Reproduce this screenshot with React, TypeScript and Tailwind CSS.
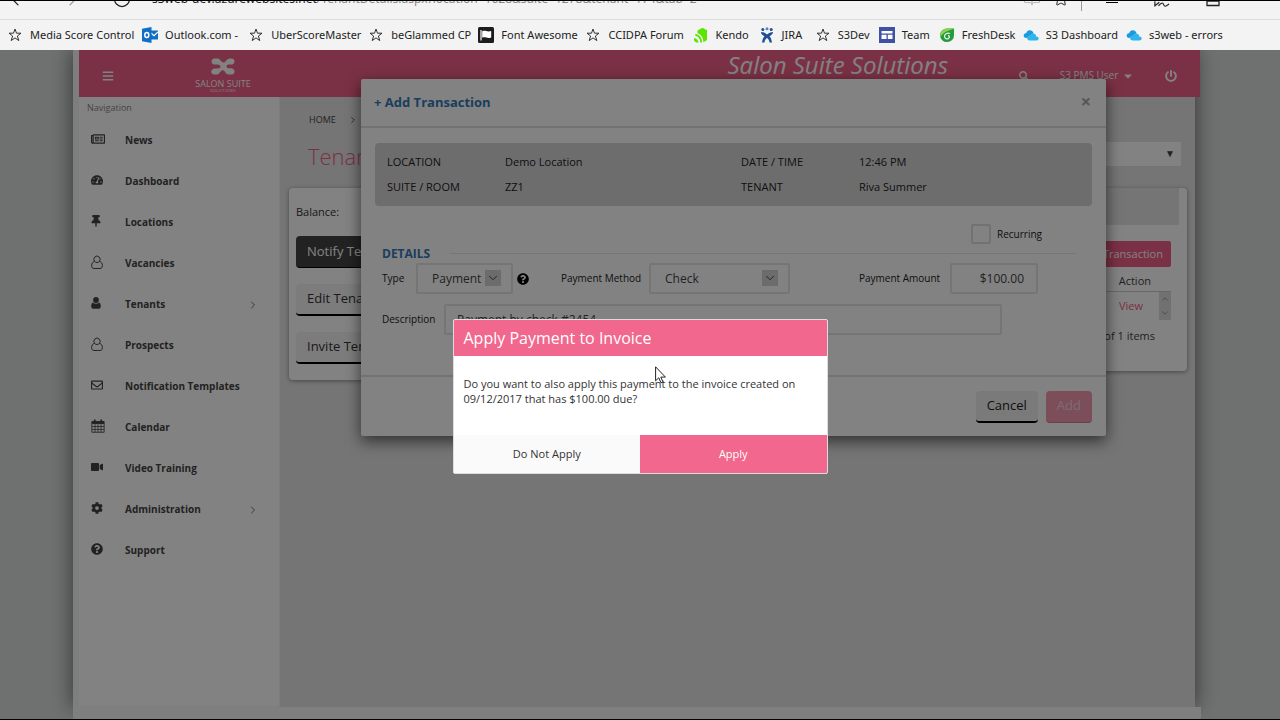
import type { ReactNode } from 'react';
import {
  FaBars,
  FaCaretDown,
  FaCog,
  FaPowerOff,
  FaQuestionCircle,
  FaRegEnvelope,
  FaRegNewspaper,
  FaSearch,
  FaTachometerAlt,
  FaThumbtack,
  FaVideo,
} from 'react-icons/fa';
import { ArrowLeft, ArrowRight, BookOpen, ChevronDown, ChevronRight, ChevronUp, RotateCw, Star } from 'lucide-react';

const StarIcon = () => (
  <svg viewBox="0 0 14 14" className="size-3.5" fill="none" stroke="#333" strokeWidth="1">
    <path d="M7 1 8.5 5.2H13L9.4 8l1.4 4.6L7 9.9l-3.8 2.7L4.6 8 1 5.2h4.5Z" />
  </svg>
);

const OutlookIcon = () => (
  <svg viewBox="0 0 16 16" className="size-4">
    <path d="M9 3.5h7v9H9Z" fill="#0f6fc6" />
    <path d="m9 6 3 2.6 4-3.6" fill="none" stroke="#fff" strokeWidth="1.2" />
    <path d="M0 1.8 9.5 0v16L0 14.2Z" fill="#0f6fc6" />
    <ellipse cx="4.8" cy="8" rx="2" ry="2.5" fill="none" stroke="#fff" strokeWidth="1.5" />
  </svg>
);

const FlagIcon = () => (
  <svg viewBox="0 0 16 16" className="size-4">
    <rect width="16" height="16" rx="1.5" fill="#1c1c1c" />
    <path d="M3 3v10.5" stroke="#fff" strokeWidth="1.2" />
    <path d="M4.2 4.2C7.2 2.6 8.7 5.4 13.2 4v6.4c-4 1.6-6-1.2-9 .3Z" fill="#fff" />
  </svg>
);

const KendoIcon = () => (
  <svg viewBox="0 0 16 16" className="size-4" fill="#5ce500">
    <path d="M9.5.8 14 3.3V13l-3.600 2.200C10.400 10.500 8 7.500 4.500 6.300V3.500Z" />
    <path d="M2.300 6.800c4.200.9 6.800 4 6.800 8.700H7.300c0-3.700-2-6.100-5-6.800Z" />
    <path d="M1 11c2.600.4 4.300 2 4.500 4.500H3L1 13.500Z" />
  </svg>
);

const JiraIcon = () => (
  <svg viewBox="0 0 16 16" className="size-4" fill="#1d4f91">
    <circle cx="3.800" cy="2.500" r="1.500" />
    <circle cx="8" cy="1.700" r="1.500" fill="#4d86c8" />
    <circle cx="12.200" cy="2.500" r="1.500" />
    <path d="M2 5c2.500 0 4 1 6 2.500C10 6 11.500 5 14 5c0 2.500-2 3-3.500 4.200C12 10.500 12.500 13 13 15.500h-2.500c0-2-1-3.500-2.500-4.500-1.500 1-2.500 2.500-2.500 4.500H3c.5-2.500 1-5 2.500-6.300C4 8 2 7.500 2 5Z" />
  </svg>
);

const TeamIcon = () => (
  <svg viewBox="0 0 16 16" className="size-4">
    <rect width="16" height="16" fill="#3f51a5" />
    <path d="M2.500 4h11v2.500h-11ZM2.500 7.700h5V12h-5ZM8.800 7.700h4.700V12H8.800Z" fill="#fff" />
  </svg>
);

const FreshIcon = () => (
  <svg viewBox="0 0 16 16" className="size-4">
    <path d="M8 1.500h7v6.500A7 6.800 0 1 1 8 1.500Z" fill="#259b3e" />
    <path d="M8 1.500h7C12 3.500 4 4 1.500 10.500.300 5 4 1.500 8 1.500Z" fill="#8fd14f" />
    <path d="M11 6.500C8 5.500 5.500 7 5.500 9.300S8 12.500 9.500 11.500s1-2.800-.5-2.800" fill="none" stroke="#e4f6e4" strokeWidth="1.200" />
  </svg>
);

const CloudIcon = () => (
  <svg viewBox="0 0 16 16" className="size-4">
    <path d="M3.5 11C1 11 .3 9 .8 7.700 1.200 6.500 2.300 6 3.200 6.200 3.700 3.800 6 2.800 8 3.500c1.500.5 2.200 1.500 2.500 2.700Z" fill="#1a9be0" />
    <path d="M7 13.500c-2.300 0-3.300-1.500-2.800-3 .4-1.200 1.600-1.700 2.500-1.400C7.300 7 9.500 6 11.300 6.800c1.500.6 1.900 1.700 1.900 2.600 1.500 0 2.600.9 2.500 2.200-.1 1.200-1 1.900-2.200 1.900Z" fill="#2fb4ee" />
  </svg>
);

const bookmarks: { label: string; icon: ReactNode }[] = [
  { label: 'Media Score Control', icon: <StarIcon /> },
  { label: 'Outlook.com -', icon: <OutlookIcon /> },
  { label: 'UberScoreMaster', icon: <StarIcon /> },
  { label: 'beGlammed CP', icon: <StarIcon /> },
  { label: 'Font Awesome', icon: <FlagIcon /> },
  { label: 'CCIDPA Forum', icon: <StarIcon /> },
  { label: 'Kendo', icon: <KendoIcon /> },
  { label: 'JIRA', icon: <JiraIcon /> },
  { label: 'S3Dev', icon: <StarIcon /> },
  { label: 'Team', icon: <TeamIcon /> },
  { label: 'FreshDesk', icon: <FreshIcon /> },
  { label: 'S3 Dashboard', icon: <CloudIcon /> },
  { label: 's3web - errors', icon: <CloudIcon /> },
];

const PersonOutline = () => (
  <svg viewBox="0 0 11 13" className="h-3.5 w-3" fill="none" stroke="currentColor" strokeWidth="0.9">
    <path d="M3.200 6A2.900 3.100 0 1 1 7.800 6C9.600 6.300 10.500 7.800 10.500 10c0 1.600-.8 2.500-2.200 2.500H2.700C1.300 12.500.500 11.600.500 10c0-2.200.9-3.700 2.700-4Z" />
    <path d="M3.200 6c1.300 1.300 3.300 1.300 4.600 0" />
  </svg>
);

const PersonSolid = () => (
  <svg viewBox="0 0 10 12" className="h-3 w-2.5" fill="currentColor">
    <circle cx="5" cy="3" r="2.900" />
    <path d="M2 5.500C.7 6 .2 7.500.2 9.300c0 1.500.8 2.400 1.900 2.400h5.800c1.100 0 1.900-.9 1.900-2.400C9.800 7.500 9.300 6 8 5.500c-1.500 1.600-4.500 1.600-6 0Z" />
  </svg>
);

const CalendarGrid = () => (
  <svg viewBox="0 0 13 13" className="size-3.5" fill="none" stroke="currentColor" strokeWidth="0.8">
    <path d="M.8 2.300h11.400v10H.8Z" />
    <path d="M.8 3.400h11.400" strokeWidth="2.400" />
    <path d="M3.500.5v2.500M9.500.5v2.500" strokeWidth="1.600" />
    <path d="M.8 7h11.400M.8 9.700h11.400M3.700 4.500v7.800M6.500 4.500v7.800M9.300 4.500v7.800" strokeWidth="0.700" />
  </svg>
);

const navItems: { label: string; icon: ReactNode; more?: boolean }[] = [
  { label: 'News', icon: <FaRegNewspaper className="size-3.5" /> },
  { label: 'Dashboard', icon: <FaTachometerAlt className="size-3" /> },
  { label: 'Locations', icon: <FaThumbtack className="h-3 w-2.5" /> },
  { label: 'Vacancies', icon: <PersonOutline /> },
  { label: 'Tenants', icon: <PersonSolid />, more: true },
  { label: 'Prospects', icon: <PersonOutline /> },
  { label: 'Notification Templates', icon: <FaRegEnvelope className="size-3" /> },
  { label: 'Calendar', icon: <CalendarGrid /> },
  { label: 'Video Training', icon: <FaVideo className="size-3" /> },
  { label: 'Administration', icon: <FaCog className="size-3" />, more: true },
  { label: 'Support', icon: <FaQuestionCircle className="size-3" /> },
];

function BrowserChrome() {
  return (
    <div className="shrink-0 border-t border-black bg-[#f3f3f3] font-['Noto_Sans',sans-serif] text-[#222]">
      <div className="flex h-[19px] items-end overflow-hidden border-b border-[#dcdcdc] pr-12 pl-2">
        <div className="flex w-36 shrink-0 items-center gap-8 self-start">
          <ArrowLeft className="-mt-3 size-5" strokeWidth={1.5} />
          <ArrowRight className="-mt-3 size-5 text-[#999]" strokeWidth={1.5} />
          <RotateCw className="-mt-3 size-5" strokeWidth={1.5} />
        </div>
        <div className="-mt-3 flex-1 self-start text-xs leading-5 whitespace-nowrap text-[#888]">
          <span className="text-[#222]">s3web-dev.azurewebsites.net</span>
          /TenantDetails.aspx?location=1628&amp;suite=1278&amp;tenant=174&amp;tab=2
        </div>
        <div className="flex items-start gap-3 self-start">
          <BookOpen className="-mt-3 size-[18px] text-[#bbb]" strokeWidth={1.5} />
          <Star className="-mt-2.5 size-4" strokeWidth={1.5} />
          <div className="h-2.5 w-px bg-[#999]" />
          <div className="mx-3 mt-px h-px w-3 bg-black" />
          <svg viewBox="0 0 18 6" className="mx-3 h-1.5 w-4" fill="none" stroke="#222" strokeWidth="1.300">
            <path d="M1 0v5l5-4M5 5c4-4 5-4 6-1s3 1 6-1" />
          </svg>
          <svg viewBox="0 0 14 6" className="mx-3 h-1.5 w-3.5" fill="none" stroke="#222" strokeWidth="1.300">
            <path d="M1 0v4.500h12V0M1 0h12" />
          </svg>
        </div>
      </div>
      <nav
        aria-label="Favorites"
        className="grid h-[30px] grid-cols-[135fr_106fr_120fr_110fr_107fr_107fr_66fr_56fr_64fr_60fr_84fr_103fr_154fr] items-center pl-[7px] text-[11px]"
      >
        {bookmarks.map((b) => (
          <a key={b.label} href="#" className="flex items-center gap-[7px] whitespace-nowrap">
            <span className="flex w-4 shrink-0 justify-center">{b.icon}</span>
            {b.label}
          </a>
        ))}
      </nav>
    </div>
  );
}

function Header() {
  return (
    <header className="mr-px ml-1.5 flex h-[47px] shrink-0 bg-[#f16087] pt-1 text-white">
      <button aria-label="Toggle menu" className="flex w-[58px] items-center justify-center">
        <FaBars className="size-3" />
      </button>
      <div className="flex w-[172px] flex-col items-center pt-1">
        <svg viewBox="0 0 26 17" className="h-[17px] w-[26px]" fill="currentColor">
          <path d="M4.500.5h3C10 .5 11 4.200 13.500 4.500 16 4.800 16 .5 20 .5h1.500c4 0 4 6 0 6h-3c-2.500 0-2.500 3.500 0 3.800h3c4 .4 4 6.200 0 6.200h-3c-3.500 0-3-4-5.500-4.200-3-.2-3 4.200-6 4.200H4.500c-4.300 0-4.300-5.500 0-6 3-.3 6 .3 6-1.800 0-2-3-2.200-6-2.200-4 0-4-6 0-6Z" />
        </svg>
        <span className="mt-1 text-[9px] leading-[9px]">SALON SUITE</span>
        <span className="text-[4px] leading-[6px] tracking-widest">SOLUTIONS</span>
      </div>
      <div className="flex-1 pr-12 text-right text-2xl leading-[22px] whitespace-nowrap italic">Salon Suite Solutions</div>
      <div className="flex items-center text-[10px]">
        <button aria-label="Search" className="flex w-14 justify-center">
          <FaSearch className="size-2.5" />
        </button>
        <button className="flex w-[90px] items-center justify-center gap-1 whitespace-nowrap">
          S3 PMS User <FaCaretDown className="size-3" />
        </button>
        <button aria-label="Log off" className="flex w-[58px] justify-center">
          <FaPowerOff className="size-3" />
        </button>
      </div>
    </header>
  );
}

function Sidebar() {
  return (
    <aside className="ml-1.5 w-[201px] shrink-0 border-r border-b border-[#f4f4f4] bg-white">
      <div className="pt-1 pl-2 text-[9px] leading-[14px] text-[#888]">Navigation</div>
      <nav aria-label="Main" className="mt-[5px]">
        {navItems.map((item) => (
          <a key={item.label} href="#" className="flex h-[41px] items-center pr-5 pl-3 text-[#444]">
            <span className="flex w-[34px] pb-1">{item.icon}</span>
            <span className="flex-1 text-[10px] font-bold whitespace-nowrap">{item.label}</span>
            {item.more && <ChevronRight className="size-3" strokeWidth={1.5} />}
          </a>
        ))}
      </nav>
    </aside>
  );
}

function TenantPage() {
  return (
    <main className="min-w-0 flex-1 bg-[#e5e5e5] pr-2 pl-[9px]">
      <div className="flex items-center gap-3 pt-4 pl-5 text-[9px] leading-[14px] text-[#444]">
        HOME <ChevronRight className="size-2.5" />
      </div>
      <div className="mt-[11px] flex items-start justify-between pr-1.5 pl-[19px]">
        <h1 className="pt-0.5 text-[22px] leading-8 font-light text-[#f16087]">Tenant</h1>
        <div className="relative mt-1 w-60">
          <select aria-label="Tenant" className="block h-6 w-full appearance-none bg-white" />
          <span className="pointer-events-none absolute top-1 right-1.5 text-[10px] text-[#444]">▼</span>
        </div>
      </div>
      <div className="mt-4 flex items-start gap-2">
        <section className="w-[300px] rounded-sm bg-white px-[7px] pt-4 pb-4 text-[13px] text-[#333] shadow-[0_1px_4px_rgba(0,0,0,0.4)]">
          <div className="mb-4 text-[11px] leading-4">Balance:</div>
          <div className="flex flex-col gap-4">
            <button className="h-8 rounded-sm border-b border-black bg-[#444] px-[11px] text-left text-white">Notify Tenant</button>
            <button className="h-8 rounded-sm border-b-2 border-black bg-[#f4f4f4] px-[11px] text-left">Edit Tenant</button>
            <button className="h-8 rounded-sm border-b-2 border-black bg-[#f4f4f4] px-[11px] text-left">Invite Tenant</button>
          </div>
        </section>
        <section className="h-[183px] flex-1 rounded-sm bg-white pr-2 text-[11px] text-[#444] shadow-[0_1px_4px_rgba(0,0,0,0.4)]">
          <div className="h-[37px] bg-[#e5e5e5]" />
          <div className="flex flex-col pt-4 pr-2">
            <button className="h-[26px] self-end rounded-xs bg-[#f16087] px-2 text-white">+ Add Transaction</button>
            <div className="mt-1.5 border-b border-[#ccc] pr-5 pb-0.5 text-right leading-4">Action</div>
            <div className="flex justify-end gap-4">
              <a href="#" className="leading-7 text-[#f16087]">View</a>
              <div className="flex h-7 w-3 flex-col items-center justify-between bg-[#ddd] py-0.5 text-[#888]">
                <ChevronUp className="size-2.5" />
                <ChevronDown className="size-2.5" />
              </div>
            </div>
            <div className="mt-2 pr-4 text-right leading-4">1 - 1 of 1 items</div>
          </div>
        </section>
      </div>
    </main>
  );
}

const fieldBox = 'h-[31px] rounded-xs border-2 border-[#e4e8e8] bg-white text-xs text-[#444]';

function SelectArrow() {
  return (
    <span className="pointer-events-none absolute top-[7px] right-3 flex h-4 w-4 items-center justify-center bg-[#d4d4d4] text-[#333]">
      <ChevronDown className="size-3.5" strokeWidth={1.5} />
    </span>
  );
}

function TransactionDialog() {
  return (
    <div className="absolute inset-0 flex items-start justify-center pt-[29px] pl-[187px]">
      <div
        role="dialog"
        aria-labelledby="transaction-title"
        className="w-[745px] rounded-xs bg-white text-[11px] text-[#222] shadow-[0_5px_15px_rgba(0,0,0,0.6)]"
      >
        <div className="flex h-[49px] items-center justify-between border-b-2 border-[#e0e0e0] pt-px pr-[15px] pl-[13px]">
          <h2 id="transaction-title" className="text-[13px] font-bold text-[#337ab7]">+ Add Transaction</h2>
          <button aria-label="Close" className="pb-1 text-lg leading-5 font-bold text-[#aaa]">×</button>
        </div>
        <div className="px-3.5 pt-[15px] pb-10">
          <dl className="grid grid-cols-[118fr_236fr_118fr_233fr] gap-y-[9px] rounded-sm bg-[#d6d6d6] py-[11px] pl-3 leading-4">
            <dt>LOCATION</dt>
            <dd>Demo Location</dd>
            <dt>DATE / TIME</dt>
            <dd>12:46 PM</dd>
            <dt>SUITE / ROOM</dt>
            <dd>ZZ1</dd>
            <dt>TENANT</dt>
            <dd>Riva Summer</dd>
          </dl>
          <div className="mt-[18px] flex items-center justify-end pr-[50px] text-[10px]">
            <label className="flex items-center gap-1.5">
              <input type="checkbox" className="size-5 appearance-none rounded-xs border-2 border-[#e0e0e0] bg-white" />
              Recurring
            </label>
          </div>
          <div className="flex h-[19px] items-center gap-5 pr-4 pl-[7px]">
            <h3 className="text-xs font-bold text-[#337ab7]">DETAILS</h3>
            <div className="h-px flex-1 bg-[#e8e8e8]" />
          </div>
          <div className="flex items-center pr-[54px] pl-[7px] text-[10px]">
            <div className="flex items-center">
              <label htmlFor="type" className="w-[34px]">Type</label>
              <div className="relative">
                <select id="type" className={`${fieldBox} w-[97px] appearance-none pl-3.5`}>
                  <option>Payment</option>
                </select>
                <SelectArrow />
              </div>
              <FaQuestionCircle className="ml-1 size-3 text-black" />
            </div>
            <div className="ml-8 flex items-center">
              <label htmlFor="method" className="w-[88px] whitespace-nowrap">Payment Method</label>
              <div className="relative">
                <select id="method" className={`${fieldBox} w-[141px] appearance-none pl-3.5`}>
                  <option>Check</option>
                </select>
                <SelectArrow />
              </div>
            </div>
            <div className="ml-auto flex items-center">
              <label htmlFor="amount" className="w-[91px] whitespace-nowrap">Payment Amount</label>
              <input id="amount" defaultValue="$100.00" className={`${fieldBox} w-[88px] pr-3 text-right`} />
            </div>
          </div>
          <div className="mt-2.5 flex items-center pr-[90px] pl-[7px] text-[10px]">
            <label htmlFor="description" className="w-[62px]">Description</label>
            <input id="description" defaultValue="Payment by check #2454" className={`${fieldBox} min-w-0 flex-1 px-[11px]`} />
          </div>
        </div>
        <div className="flex h-[61px] items-center justify-end gap-2 border-t-2 border-[#e0e0e0] px-3.5 text-[13px]">
          <button className="h-8 rounded-sm border-b-2 border-black bg-[#f0f0f0] px-[11px]">Cancel</button>
          <button className="h-8 rounded-sm border-b border-[#cc7d93] bg-[#f39ab1] px-[11px] text-[#f6d5de]">Add</button>
        </div>
      </div>
    </div>
  );
}

function ConfirmDialog() {
  return (
    <div className="absolute inset-0 flex items-start justify-center bg-black/49 pt-[269px]">
      <div
        role="alertdialog"
        aria-labelledby="confirm-title"
        aria-describedby="confirm-text"
        className="w-[375px] overflow-hidden rounded-xs border border-[#ddd] bg-white text-[11px] text-[#333]"
      >
        <h2 id="confirm-title" className="bg-[#f1678d] px-2.5 text-base leading-9 text-white">Apply Payment to Invoice</h2>
        <p id="confirm-text" className="px-2.5 pt-5 pb-[29px] leading-[15px]">
          Do you want to also apply this payment to the invoice created on 09/12/2017 that has $100.00 due?
        </p>
        <div className="grid grid-cols-2 leading-[38px]">
          <button className="bg-[#fafafa]">Do Not Apply</button>
          <button className="bg-[#f1678d] text-white">Apply</button>
        </div>
      </div>
    </div>
  );
}

export default function App() {
  return (
    <div className="flex h-screen flex-col overflow-hidden border-b border-black font-['Open_Sans',sans-serif]">
      <BrowserChrome />
      <div className="relative min-h-0 flex-1 overflow-hidden bg-[#d8dedc]">
        <div className="mr-[79px] ml-[73px] flex h-full flex-col">
          <div className="mr-1.5 flex min-h-0 flex-1 flex-col bg-[#f8f8f8] shadow-[0_0_20px_rgba(0,0,0,0.55)]">
            <div className="-mr-1.5">
              <Header />
            </div>
            <div className="flex min-h-0 flex-1">
              <Sidebar />
              <TenantPage />
            </div>
          </div>
          <footer className="h-3 shrink-0 bg-[#fafafa]" />
        </div>
        <TransactionDialog />
        <ConfirmDialog />
        <svg viewBox="0 0 12 18" className="absolute top-[316px] left-[655px] h-[18px] w-3" fill="#fff" stroke="#222" strokeWidth="1">
          <path d="M.6.8v14l3.200-3 2.200 5 2-.9-2.200-4.800h4.600Z" />
        </svg>
      </div>
    </div>
  );
}
